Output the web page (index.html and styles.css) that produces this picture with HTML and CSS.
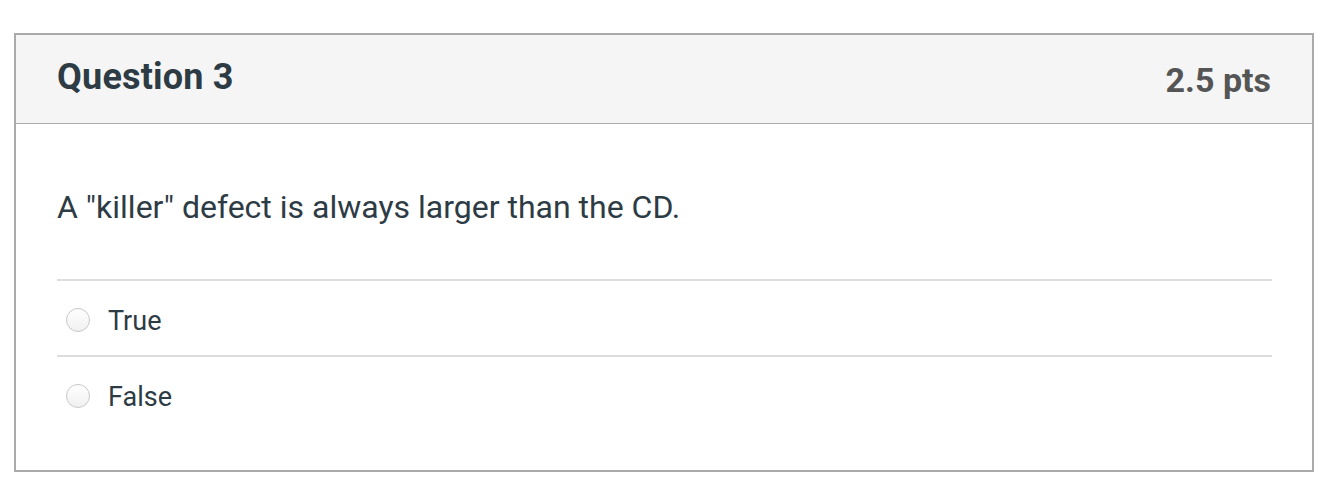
FILE: index.html
```html
<!DOCTYPE html>
<html>
<head>
<meta charset="utf-8">
<link rel="stylesheet" href="styles.css">
</head>
<body>
<div class="card">
  <div class="header">
    <h2 class="title">Question 3</h2>
    <div class="pts">2.5 pts</div>
  </div>
  <div class="content">
    <p class="question">A "killer" defect is always larger than the CD.</p>
    <div class="answers">
      <label class="answer"><span class="radio"></span><span class="label">True</span></label>
      <label class="answer"><span class="radio"></span><span class="label">False</span></label>
    </div>
  </div>
</div>
</body>
</html>
```
FILE: styles.css
```css
html, body { margin: 0; padding: 0; background: #fff; }
body { font-family: Roboto, "Liberation Sans", sans-serif; color: #2d3b45; padding: 33px 0 0 14px; }
.card { width: 1296px; border: 2px solid #aaa; }
.header { height: 89px; box-sizing: border-box; background: #f5f5f5; border-bottom: 1px solid #aaa; display: flex; align-items: flex-start; justify-content: space-between; padding: 24px 41px 0; }
.title { margin: 0; font-size: 36px; letter-spacing: 0.2px; font-weight: 700; color: #2d3b45; line-height: 1; }
.pts { margin-top: 4px; font-size: 34px; font-weight: 700; color: #555; line-height: 1; }
.content { padding: 0 40px 39px 41px; }
.question { margin: 0; height: 157px; box-sizing: border-box; padding-top: 10px; display: flex; align-items: center; font-size: 32px; line-height: 1; border-bottom: 2px solid #ddd; }
.answer { display: flex; align-items: center; height: 74px; box-sizing: border-box; padding: 3px 0 0 9px; gap: 18px; font-size: 27px; line-height: 1; }
.answer + .answer { border-top: 2px solid #ddd; height: 76px; }
.label { padding-top: 3px; }
.radio { width: 24px; height: 24px; border-radius: 50%; border: 1px solid #c8c8c8; background: linear-gradient(#fff, #f0f0f0); box-sizing: border-box; }
```
